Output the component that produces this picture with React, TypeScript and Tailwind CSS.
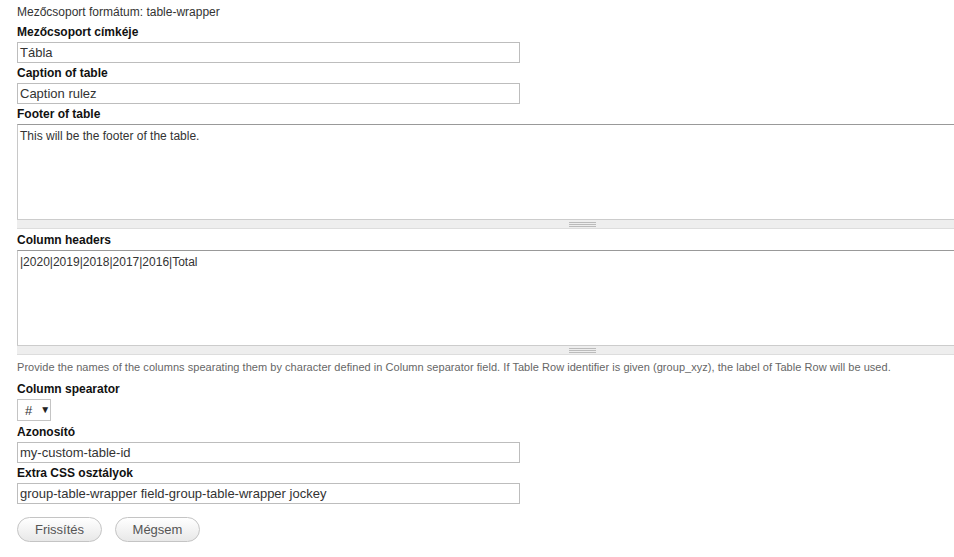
import React from "react";

export default function App() {
  return (
    <div className="h-[557px] w-[954px] overflow-hidden bg-white pl-[17px] pt-[5px] font-['Liberation_Sans',Arial,sans-serif] text-[12px] leading-[15px] text-[#333]">
      <p className="h-[15px]">Mezőcsoport formátum: table-wrapper</p>

      <Label className="mt-[4px]">Mezőcsoport címkéje</Label>
      <TextInput value="Tábla" />

      <Label className="mt-[2px]">Caption of table</Label>
      <TextInput value="Caption rulez" />

      <Label className="mt-[2px]">Footer of table</Label>
      <TextArea value="This will be the footer of the table." />

      <Label className="mt-[3px]">Column headers</Label>
      <TextArea value="|2020|2019|2018|2017|2016|Total" />

      <p className="mt-[5px] h-[15px] whitespace-nowrap text-[11px] tracking-[0.04px] text-[#666]">
        Provide the names of the columns spearating them by character defined
        in Column separator field. If Table Row identifier is given
        (group_xyz), the label of Table Row will be used.
      </p>

      <Label className="mt-[6px]">Column spearator</Label>
      <div className="mt-[3px] flex h-[22px] w-[34px] items-center border border-[#c4c4c4] bg-white pl-[7px] text-[13px] text-[#333]">
        <span>#</span>
        <span className="ml-[8px] text-[10px] leading-none text-[#222]">▼</span>
      </div>

      <Label className="mt-[3px]">Azonosító</Label>
      <TextInput value="my-custom-table-id" />

      <Label className="mt-[2px]">Extra CSS osztályok</Label>
      <TextInput value="group-table-wrapper field-group-table-wrapper jockey" />

      <div className="mt-[13px] flex gap-[13px]">
        <Button>Frissítés</Button>
        <Button>Mégsem</Button>
      </div>
    </div>
  );
}

// ── Components ─────────────────────────────────────────────────────

function Label({
  children,
  className = "",
}: {
  children: React.ReactNode;
  className?: string;
}) {
  return (
    <div className={`h-[15px] font-bold leading-[17px] text-[#111] ${className}`}>
      {children}
    </div>
  );
}

function TextInput({ value }: { value: string }) {
  return (
    <div className="mt-[3px] flex h-[21px] w-[503px] items-center border border-[#bdbdbd] bg-white pl-[2px] text-[13px] text-[#333]">
      {value}
    </div>
  );
}

function TextArea({ value }: { value: string }) {
  return (
    <div className="mt-[3px] w-[1131px]">
      <div className="h-[95px] border border-b-0 border-[#c8c8c8] border-t-[#999] px-[2px] pt-[4px] text-[12px] leading-[14px] text-[#333]">
        {value}
      </div>
      <div className="flex h-[10px] items-center justify-center border-y border-t-[#ccc] border-b-[#ddd] bg-[#eeeeee]">
        <div className="flex w-[27px] flex-col gap-[1px]">
          <span className="h-px bg-[#bbb]" />
          <span className="h-px bg-[#bbb]" />
          <span className="h-px bg-[#bbb]" />
        </div>
      </div>
    </div>
  );
}

function Button({ children }: { children: React.ReactNode }) {
  return (
    <button className="flex h-[25px] w-[85px] items-center justify-center rounded-full border border-[#c4c4c4] bg-gradient-to-b from-white to-[#e8e8e8] text-[13px] text-[#555]">
      {children}
    </button>
  );
}
